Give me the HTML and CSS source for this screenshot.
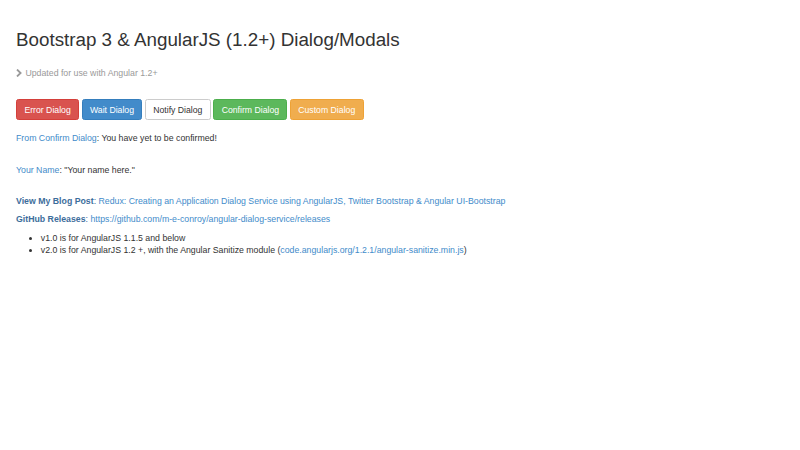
FILE: index.html
```html
<!DOCTYPE html>
<html lang="en">

<head>
    <meta charset="UTF-8">
    <title>Bootstrap 3 &amp; AngularJS (1.2+) Dialog/Modals</title>
    <link rel="stylesheet" href="styles.css">
</head>

<body>
    <div class="container">
        <h1>Bootstrap 3 &amp; AngularJS (1.2+) Dialog/Modals</h1>
        <p class="muted">
            <svg class="chevron" width="6" height="8" viewBox="0 0 6 8"><path d="M1 0.5 L4.6 4 L1 7.5" /></svg>
            Updated for use with Angular 1.2+
        </p>

        <div class="buttons">
            <button class="btn btn-danger">Error Dialog</button>
            <button class="btn btn-primary">Wait Dialog</button>
            <button class="btn btn-default">Notify Dialog</button>
            <button class="btn btn-success">Confirm Dialog</button>
            <button class="btn btn-warning">Custom Dialog</button>
        </div>

        <p class="result"><a href="#">From Confirm Dialog</a>: You have yet to be confirmed!</p>

        <p class="result"><a href="#">Your Name</a>: "Your name here."</p>

        <p class="info"><strong class="label">View My Blog Post</strong>: <a href="#">Redux: Creating an Application Dialog Service using AngularJS, Twitter Bootstrap &amp; Angular UI-Bootstrap</a></p>
        <p class="info"><strong class="label">GitHub Releases</strong>: <a href="#">https://github.com/m-e-conroy/angular-dialog-service/releases</a></p>
        <ul>
            <li>v1.0 is for AngularJS 1.1.5 and below</li>
            <li>v2.0 is for AngularJS 1.2 +, with the Angular Sanitize module (<a href="#">code.angularjs.org/1.2.1/angular-sanitize.min.js</a>)</li>
        </ul>
    </div>
</body>

</html>
```

FILE: styles.css
```css
* {
    margin: 0;
    padding: 0;
    box-sizing: border-box;
}

body {
    font-family: "Liberation Sans", Arial, sans-serif;
    font-size: 8.75px;
    line-height: 12.4px;
    color: #333;
    background: #fff;
}

.container {
    padding: 29.5px 16px 0 16px;
}

h1 {
    font-size: 18.8px;
    font-weight: normal;
    line-height: 20.7px;
    color: #333;
}

a {
    color: #428bca;
    text-decoration: none;
}

.muted {
    color: #999;
    margin-top: 16.8px;
}

.chevron {
    fill: none;
    stroke: #999;
    stroke-width: 1.8;
    margin-right: 1px;
    vertical-align: -0.5px;
}

.buttons {
    display: flex;
    gap: 2.4px;
    margin-top: 19.6px;
}

.btn {
    font-family: inherit;
    font-size: 8.7px;
    line-height: 12.4px;
    height: 21px;
    padding: 3.7px 7.4px;
    border: 1px solid transparent;
    border-radius: 2.5px;
    color: #fff;
    cursor: pointer;
}

.btn-danger {
    background: #d9534f;
    border-color: #d43f3a;
}

.btn-primary {
    background: #428bca;
    border-color: #357ebd;
}

.btn-default {
    background: #fff;
    border-color: #ccc;
    color: #333;
}

.btn-success {
    background: #5cb85c;
    border-color: #4cae4c;
}

.btn-warning {
    background: #f0ad4e;
    border-color: #eea236;
}

.result {
    margin-top: 12px;
}

.result + .result {
    margin-top: 19.6px;
}

.info {
    margin-top: 18.6px;
    color: #3c6d9b;
}

.info + .info {
    margin-top: 5.6px;
}

.label {
    color: #3c6d9b;
}

ul {
    margin-top: 6.6px;
    padding-left: 24.8px;
}
```
